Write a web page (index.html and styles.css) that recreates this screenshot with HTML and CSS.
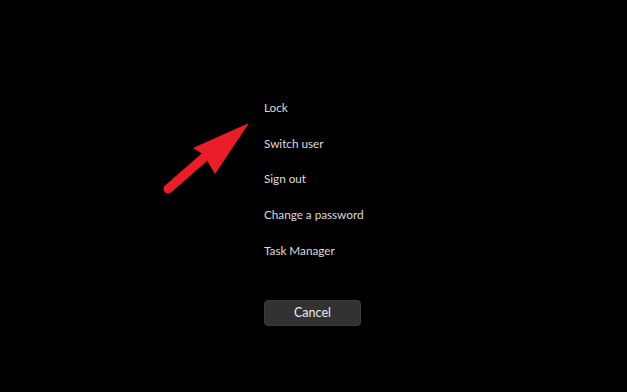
FILE: index.html
```html
<!DOCTYPE html>
<html>
<head>
<meta charset="utf-8">
<link rel="stylesheet" href="styles.css">
</head>
<body>
<div class="screen">
  <ul class="menu">
    <li>Lock</li>
    <li>Switch user</li>
    <li>Sign out</li>
    <li>Change a password</li>
    <li>Task Manager</li>
  </ul>
  <button class="cancel">Cancel</button>
  <svg class="arrow" width="627" height="392" viewBox="0 0 627 392">
    <line x1="168" y1="189" x2="207" y2="155" stroke="#ea1d29" stroke-width="9" stroke-linecap="round"/>
    <polygon points="249,123 193,148 203,154 215,174" fill="#ea1d29"/>
  </svg>
</div>
</body>
</html>
```
FILE: styles.css
```css
html, body {
  margin: 0;
  padding: 0;
  background: #000;
}
.screen {
  position: relative;
  width: 627px;
  height: 392px;
  background: #000;
  display: flex;
  flex-direction: column;
  align-items: flex-start;
  padding: 90px 0 0 264px;
  box-sizing: border-box;
  font-family: Lato, "Noto Sans", sans-serif;
}
.menu {
  list-style: none;
  margin: 0;
  padding: 0;
}
.menu li {
  height: 35.7px;
  line-height: 35.7px;
  font-size: 11.8px;
  letter-spacing: -0.05px;
  color: #dcdcdc;
}
.cancel {
  margin-top: 31.5px;
  width: 97px;
  height: 26px;
  background: #323232;
  border: 1px solid #3c3c3c;
  border-radius: 4px;
  color: #ececec;
  font-family: Lato, "Noto Sans", sans-serif;
  font-size: 12.5px;
  padding: 0;
}
.arrow {
  position: absolute;
  left: 0;
  top: 0;
}
```
